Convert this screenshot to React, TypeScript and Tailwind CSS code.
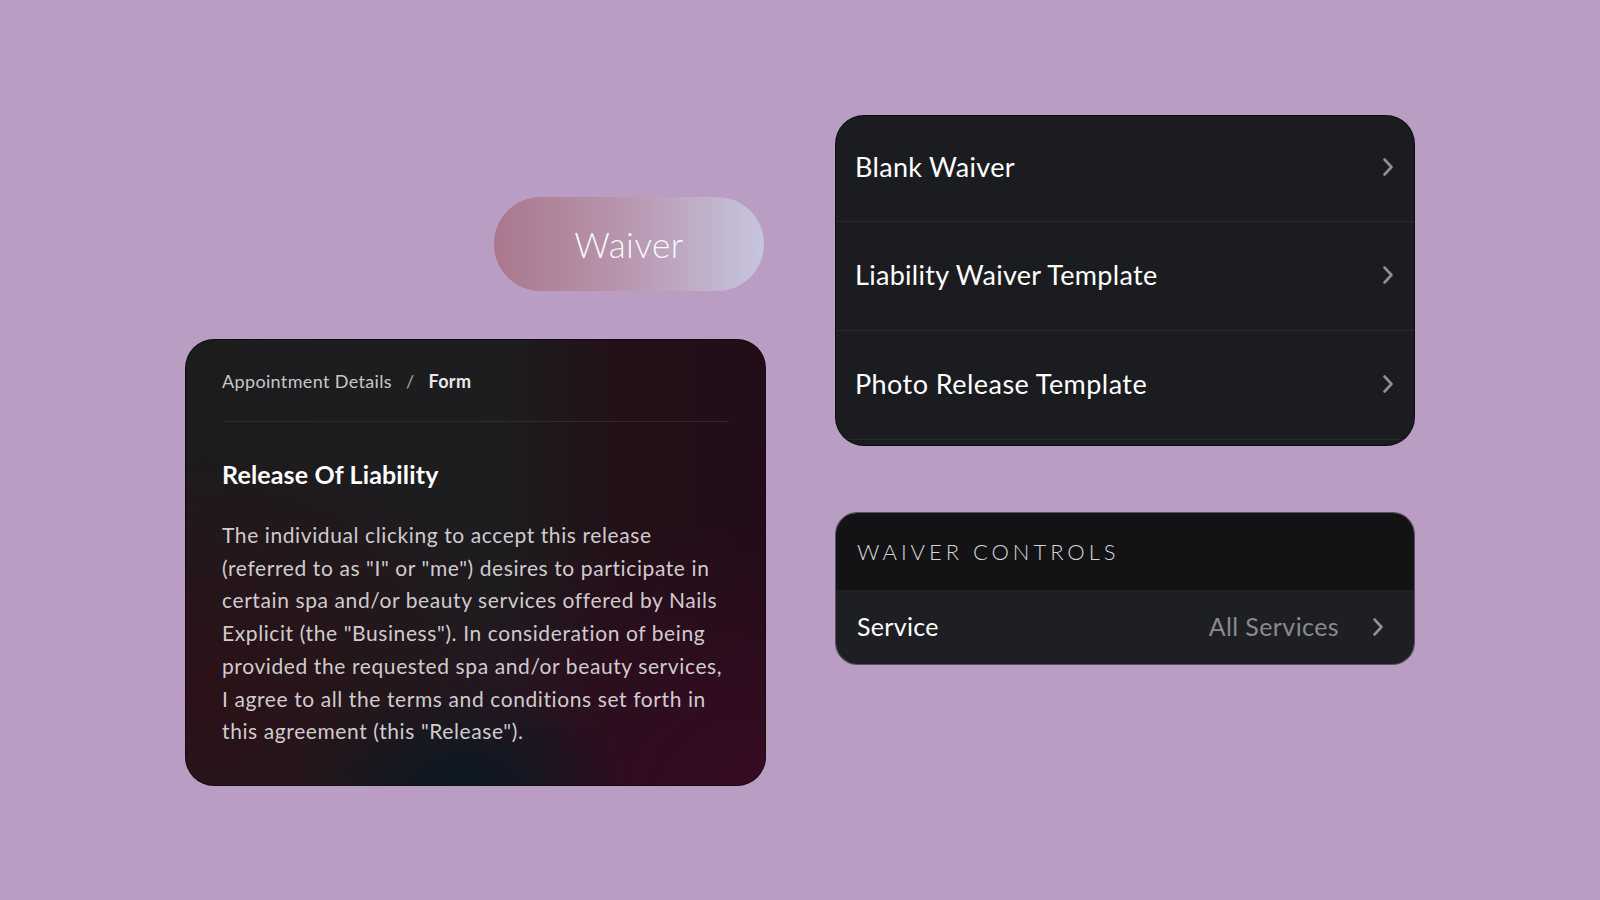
import React from "react";

const Chevron = ({ className = "" }: { className?: string }) => (
  <svg width="12" height="20" viewBox="0 0 12 20" fill="none" className={className}>
    <path d="M2.5 2.5 L9.5 10 L2.5 17.5" stroke="#8e8e93" strokeWidth="2.6" strokeLinecap="round" strokeLinejoin="round" />
  </svg>
);

const body = [
  "The individual clicking to accept this release",
  '(referred to as "I" or "me") desires to participate in',
  "certain spa and/or beauty services offered by Nails",
  'Explicit (the "Business"). In consideration of being',
  "provided the requested spa and/or beauty services,",
  "I agree to all the terms and conditions set forth in",
  'this agreement (this "Release").',
];

export default function App() {
  return (
    <div
      className="w-[1600px] h-[900px] bg-[#b99dc2] flex justify-center items-start gap-[69px] pt-[115px] overflow-hidden"
      style={{ fontFamily: "Lato, 'Noto Sans', sans-serif" }}
    >
      {/* Left column */}
      <div className="w-[581px] flex flex-col items-end mt-[82px]">
        <div className="w-[270px] h-[94px] mr-[2px] rounded-full bg-[linear-gradient(90deg,#a9778d_0%,#b794ac_45%,#c6c4dd_100%)] flex items-center justify-center">
          <span className="text-[35px] font-light text-white/95 tracking-[0.5px]">Waiver</span>
        </div>
        <div className="mt-[48px] w-[581px] h-[447px] rounded-[29px] overflow-hidden border border-black/40 [background-image:radial-gradient(ellipse_28%_22%_at_48%_100%,rgba(8,24,34,0.9)_0%,rgba(8,24,34,0)_100%),radial-gradient(ellipse_70%_60%_at_100%_100%,#360b24_0%,rgba(54,11,36,0)_100%),radial-gradient(ellipse_60%_60%_at_0%_80%,#2c1018_0%,rgba(44,16,24,0)_100%),linear-gradient(90deg,#1c1c1d_0%,#1d1c1f_55%,#221018_75%,#220d18_100%)]">
          <div className="px-9 pt-[29px]">
            <div className="h-6 leading-6 text-[18px] tracking-[0.35px] flex items-center whitespace-nowrap">
              <span className="text-[#c9c6c7]">Appointment Details</span>
              <span className="text-[#a9a5a7] mx-[14px]">/</span>
              <span className="text-[#ebe7e8] font-bold">Form</span>
            </div>
            <div className="mt-[28px] h-px bg-[#2f2b2d]" />
            <div className="mt-[36px] text-[25px] leading-8 font-bold tracking-[0.15px] text-white">Release Of Liability</div>
            <div className="mt-[29px] text-[21px] leading-[32.7px] tracking-[0.6px] text-[#d0cbcd] whitespace-nowrap">
              {body.map((l, i) => (
                <div key={i}>{l}</div>
              ))}
            </div>
          </div>
        </div>
      </div>

      {/* Right column */}
      <div className="w-[580px] flex flex-col">
        <div className="h-[331px] rounded-[29px] overflow-hidden bg-[#1b1c20] border border-black/50">
          <div className="h-[106px] border-b border-[#28292e] flex items-center justify-between pl-[19px] pr-[20px] pb-[3px]">
            <span className="text-[27px] tracking-[0.3px] text-white">Blank Waiver</span>
            <Chevron />
          </div>
          <div className="h-[109px] border-b border-[#28292e] flex items-center justify-between pl-[19px] pr-[20px] pb-[2px]">
            <span className="text-[27px] tracking-[0.3px] text-white">Liability Waiver Template</span>
            <Chevron />
          </div>
          <div className="h-[109px] border-b border-[#28292e] flex items-center justify-between pl-[19px] pr-[20px] pb-[2px]">
            <span className="text-[27px] tracking-[0.45px] text-white">Photo Release Template</span>
            <Chevron />
          </div>
        </div>

        <div className="mt-[66px] h-[153px] rounded-[22px] overflow-hidden border border-black/50 flex flex-col">
          <div className="h-[77px] bg-[#131315] flex items-center pl-[21px]">
            <span className="text-[22px] tracking-[0.18em] text-[#d5d3d7] font-light">WAIVER CONTROLS</span>
          </div>
          <div className="flex-1 bg-[#1e1f23] flex items-center justify-between pl-[21px] pr-[30px]">
            <span className="text-[25px] tracking-[0.3px] text-white">Service</span>
            <div className="flex items-center gap-[33px]">
              <span className="text-[25px] tracking-[0.4px] text-[#8a8a8f]">All Services</span>
              <Chevron />
            </div>
          </div>
        </div>
      </div>
    </div>
  );
}
